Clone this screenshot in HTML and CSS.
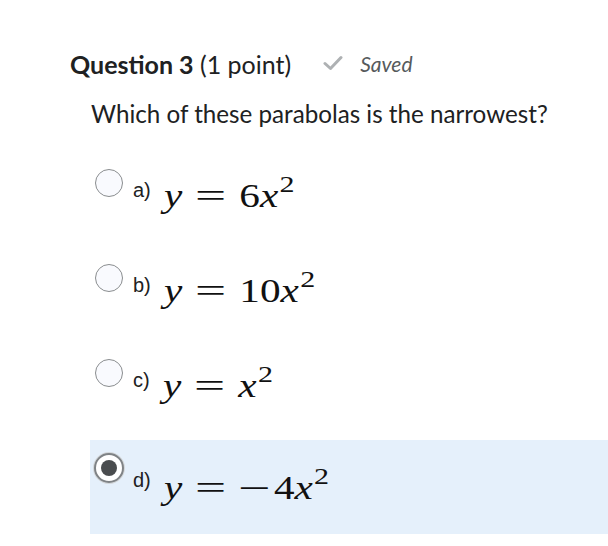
FILE: index.html
```html
<!DOCTYPE html>
<html lang="en">
<head>
<meta charset="utf-8">
<title>Question 3</title>
<link rel="stylesheet" href="styles.css">
</head>
<body>
<div class="quiz">
  <div class="q-head">
    <span class="q-title"><strong>Question 3</strong> (1 point)</span>
    <span class="saved">
      <svg class="check" width="20" height="16" viewBox="0 0 20 16"><path d="M2 8.5 L7.5 13.5 L18 2.5" fill="none" stroke="#aeb1b3" stroke-width="3" stroke-linecap="round" stroke-linejoin="round"/></svg>
      <em>Saved</em>
    </span>
  </div>
  <p class="q-text">Which of these parabolas is the narrowest?</p>
  <ul class="options">
    <li class="option">
      <span class="radio"></span>
      <span class="label">a)</span>
      <span class="math"><i class="mi">y</i><span class="eq">=</span><span class="mn">6</span><i class="mi">x</i><sup>2</sup></span>
    </li>
    <li class="option">
      <span class="radio"></span>
      <span class="label">b)</span>
      <span class="math"><i class="mi">y</i><span class="eq">=</span><span class="mn">10</span><i class="mi">x</i><sup>2</sup></span>
    </li>
    <li class="option">
      <span class="radio"></span>
      <span class="label">c)</span>
      <span class="math"><i class="mi">y</i><span class="eq">=</span><i class="mi">x</i><sup>2</sup></span>
    </li>
    <li class="option selected">
      <span class="radio"></span>
      <span class="label">d)</span>
      <span class="math"><i class="mi">y</i><span class="eq">=</span><span class="minus">−</span><span class="mn">4</span><i class="mi">x</i><sup>2</sup></span>
    </li>
  </ul>
</div>
</body>
</html>
```

FILE: styles.css
```css
html, body {
  margin: 0;
  padding: 0;
  background: #ffffff;
}

.quiz {
  padding: 49px 0 0 70px;
  color: #202122;
  font-family: Lato, "Open Sans", sans-serif;
}

.q-head {
  display: flex;
  align-items: center;
  height: 30px;
}

.q-title {
  font-size: 25px;
  line-height: 30px;
}

.q-title strong {
  font-weight: 700;
}

.saved {
  display: flex;
  align-items: center;
  margin-left: 32px;
  color: #565a5c;
  font-size: 21px;
  line-height: 30px;
}

.saved .check {
  margin-right: 17px;
  margin-top: -2px;
}

.saved em {
  font-style: italic;
}

.q-text {
  margin: 20px 0 0 21px;
  font-size: 24.2px;
  line-height: 30px;
}

.options {
  list-style: none;
  margin: 26px 0 0 20px;
  padding: 0;
}

.option {
  display: flex;
  align-items: flex-start;
  height: 94px;
  padding-left: 5px;
  margin-bottom: 1px;
}

.option.selected {
  background: #e5f0fb;
}

.radio {
  box-sizing: border-box;
  width: 28px;
  height: 28px;
  margin-top: 14px;
  border-radius: 50%;
  border: 1px solid #8a8d8f;
  background: #f9fafe;
  flex: none;
  position: relative;
}

.selected .radio {
  width: 30px;
  height: 30px;
  margin: 13px -1px 0 -1px;
  border: 2px solid #7f8386;
  background: #ffffff;
  box-shadow: 0 0 0 1px #d3d7da;
}

.selected .radio::after {
  content: "";
  position: absolute;
  left: 5px;
  top: 5px;
  width: 16px;
  height: 16px;
  border-radius: 50%;
  background: #494c4e;
}

.label {
  margin: 25px 0 0 10px;
  font-family: "Liberation Sans", Arial, sans-serif;
  font-size: 20px;
  line-height: 20px;
  color: #202122;
}

.math {
  margin: 23px 0 0 13px;
  font-family: "Liberation Serif", "Times New Roman", serif;
  font-size: 33px;
  line-height: 36px;
  color: #111111;
  white-space: nowrap;
  transform: scaleX(1.25);
  transform-origin: 0 50%;
}

.selected .label {
  margin-top: 30px;
}

.selected .math {
  margin-top: 30px;
}

.math .mi {
  font-style: italic;
}

.math .eq {
  display: inline-block;
  margin: 0 14px 0 13px;
  transform: scaleX(1.34);
}

.math .minus {
  display: inline-block;
  margin: 0 6px 0 3px;
  transform: scaleX(1.4);
}

.math sup {
  font-size: 24px;
  line-height: 0;
  vertical-align: 0;
  position: relative;
  top: -15px;
  margin-left: 1px;
}
```
